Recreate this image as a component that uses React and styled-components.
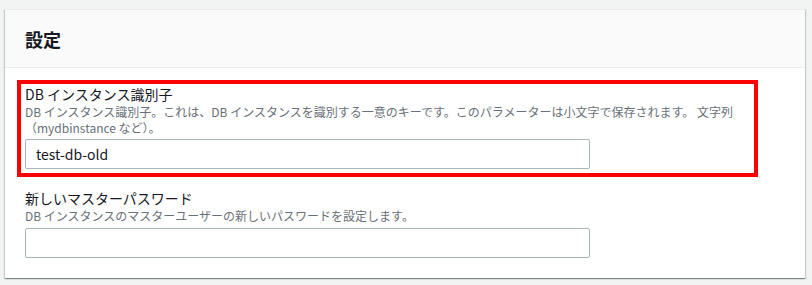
import React from "react";
import styled, { createGlobalStyle } from "styled-components";

const GlobalStyle = createGlobalStyle`
  body {
    margin: 0;
    background: #f2f3f3;
    font-family: "Noto Sans CJK JP", "Liberation Sans", sans-serif;
    color: #16191f;
  }
`;

const Page = styled.div`
  padding: 9px 7px 6px 5px;
`;

const Card = styled.section`
  background: #ffffff;
  border-top: 1px solid #eaeded;
  box-shadow: 0 1px 1px 0 rgba(0, 28, 36, 0.3),
    1px 1px 1px 0 rgba(0, 28, 36, 0.15), -1px 1px 1px 0 rgba(0, 28, 36, 0.15);
`;

const CardHeader = styled.header`
  display: flex;
  align-items: center;
  height: 57px;
  padding: 0 20px;
  background: #fafafa;
  border-bottom: 1px solid #eaeded;
  h2 {
    margin: 0;
    font-size: 18px;
    font-weight: 700;
    line-height: 22px;
  }
`;

const CardBody = styled.div`
  padding: 12px 20px 20px;
`;

const FieldStack = styled.div`
  display: flex;
  flex-direction: column;
  gap: 11px;
  max-width: 725px;
`;

const Field = styled.div`
  display: flex;
  flex-direction: column;
  ${({ $highlight }) =>
    $highlight &&
    `
    margin: 0 -8px;
    padding: 0 4px 4px;
    border: 4px solid #ff0000;
  `}
`;

const Label = styled.label`
  font-size: 14px;
  line-height: 20px;
  color: #16191f;
`;

const Description = styled.div`
  font-size: 12px;
  line-height: 16px;
  color: #687078;
`;

const Input = styled.input`
  box-sizing: border-box;
  width: 565px;
  height: 30px;
  margin-top: ${({ $gap }) => $gap || 4}px;
  padding: 0 10px;
  border: 1px solid #aab7b8;
  border-radius: 2px;
  background: #ffffff;
  font-family: "Noto Sans CJK JP", "Liberation Sans", sans-serif;
  font-size: 14px;
  color: #16191f;
  outline: none;
`;

export default function App() {
  return (
    <>
      <GlobalStyle />
      <Page>
        <Card>
          <CardHeader>
            <h2>設定</h2>
          </CardHeader>
          <CardBody>
            <FieldStack>
              <Field $highlight>
                <Label>DB インスタンス識別子</Label>
                <Description>
                  DB インスタンス識別子。これは、DB インスタンスを識別する一意のキーです。このパラメーターは小文字で保存されます。 文字列（mydbinstance など）。
                </Description>
                <Input $gap={3} defaultValue="test-db-old" />
              </Field>
              <Field>
                <Label>新しいマスターパスワード</Label>
                <Description>
                  DB インスタンスのマスターユーザーの新しいパスワードを設定します。
                </Description>
                <Input type="password" />
              </Field>
            </FieldStack>
          </CardBody>
        </Card>
      </Page>
    </>
  );
}
